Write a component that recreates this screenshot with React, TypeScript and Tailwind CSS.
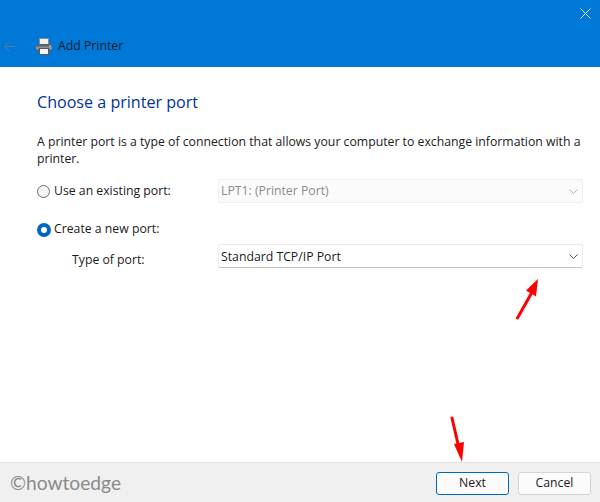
import React from "react";

function Chevron({ color }: { color: string }) {
  return (
    <svg width="9" height="5" viewBox="0 0 9 5" fill="none" stroke={color} strokeWidth="1">
      <path d="M0.5 0.5 L4.5 4.5 L8.5 0.5" />
    </svg>
  );
}

function Printer() {
  return (
    <svg width="18" height="17" viewBox="0 0 18 17" className="block">
      <rect x="4.5" y="0.5" width="9" height="6" fill="#eef0f2" stroke="#8a8f96" />
      <path d="M3 6 H15 L17 8 V13 H1 V8 Z" fill="#5b6066" />
      <rect x="1" y="8.5" width="16" height="3" fill="#8d9298" />
      <rect x="4.5" y="10.5" width="9" height="6" fill="#f4f5f6" stroke="#54595f" />
      <rect x="14" y="7.5" width="2" height="1" fill="#d5d8db" />
    </svg>
  );
}

export default function App() {
  return (
    <div className="relative w-[600px] h-[502px] flex flex-col bg-white font-['Open_Sans','Noto_Sans',sans-serif] text-[12.25px] text-[#1a1a1a]">
      <header className="h-[67px] bg-[#0078d7] flex flex-col shrink-0 border-b border-[#0a73c8]">
        <div className="flex justify-end pt-[8px] pr-[9px] h-[37px]">
          <svg width="11" height="11" viewBox="0 0 11 11" stroke="#dcebf8" strokeWidth="1" fill="none">
            <path d="M0.5 0.5 L10.5 10.5 M10.5 0.5 L0.5 10.5" />
          </svg>
        </div>
        <div className="flex items-center pl-[4px] h-[18px]">
          <svg width="12" height="11" viewBox="0 0 12 11" stroke="#4f7da3" strokeWidth="1" fill="none">
            <path d="M11.5 5.5 H1 M5.5 0.5 L0.8 5.5 L5.5 10.5" />
          </svg>
          <span className="ml-[19px]"><Printer /></span>
          <span className="ml-[5px] text-[#0b1c2c]">Add Printer</span>
        </div>
      </header>

      <main className="flex-1 pl-[37px] pr-[17px] pt-[24px]">
        <h1 className="text-[16.1px] leading-[22px] text-[#003399] font-normal">Choose a printer port</h1>
        <p className="mt-[20px] leading-[17px]">
          A printer port is a type of connection that allows your computer to exchange information with a printer.
        </p>

        <div className="mt-[12px] flex items-center h-[24px]">
          <span className="w-[13px] h-[13px] rounded-full border border-[#6d6d6d] bg-[#f5f5f5] shrink-0" />
          <span className="ml-[4px]">Use an existing port:</span>
          <div className="ml-auto w-[365px] h-[24px] flex items-center justify-between pl-[2px] pr-[4px] bg-[#fbfbfb] border border-[#efefef] rounded-[2px] text-[#8b8b8b]">
            <span>LPT1: (Printer Port)</span>
            <Chevron color="#b5b5b5" />
          </div>
        </div>

        <div className="mt-[19px] flex items-center h-[15px]">
          <span className="w-[14px] h-[14px] rounded-full border-[4px] border-[#0067c0] bg-white shrink-0" />
          <span className="ml-[3px]">Create a new port:</span>
        </div>

        <div className="mt-[7px] flex items-center h-[24px]">
          <span className="ml-[35px] mt-[9px]">Type of port:</span>
          <div className="ml-auto w-[365px] h-[24px] flex items-center justify-between pl-[2px] pr-[4px] bg-white border border-[#ececec] border-b-[#c4c4c4] rounded-[2px]">
            <span className="mt-[3px]">Standard TCP/IP Port</span>
            <Chevron color="#555555" />
          </div>
        </div>
      </main>

      <footer className="h-[40px] shrink-0 bg-[#f0f0f0] border-t border-[#e4e4e4] flex items-center pl-[10px] pr-[9px] pt-[2px]">
        <span className="font-['Lato',sans-serif] text-[19.2px] text-[#8a8a8a]">©howtoedge</span>
        <button className="ml-auto w-[73px] h-[23px] bg-[#fbfbfb] border border-[#0067c0] rounded-[3px]">Next</button>
        <button className="ml-[9px] w-[73px] h-[23px] bg-[#fbfbfb] border border-[#d4d4d4] rounded-[3px]">Cancel</button>
      </footer>

      <svg className="absolute left-[514px] top-[278px]" width="28" height="44" viewBox="0 0 28 44" fill="none">
        <path d="M3.5 40 L17 16" stroke="#ff0000" strokeWidth="3" strokeLinecap="round" />
        <path d="M24 1 L22 18.5 L12 12.5 Z" fill="#ff0000" />
      </svg>
      <svg className="absolute left-[446px] top-[414px]" width="22" height="50" viewBox="0 0 22 50" fill="none">
        <path d="M6 4 L12 30" stroke="#ff0000" strokeWidth="3" strokeLinecap="round" />
        <path d="M16 48 L8 30 L18 28 Z" fill="#ff0000" />
      </svg>
    </div>
  );
}
